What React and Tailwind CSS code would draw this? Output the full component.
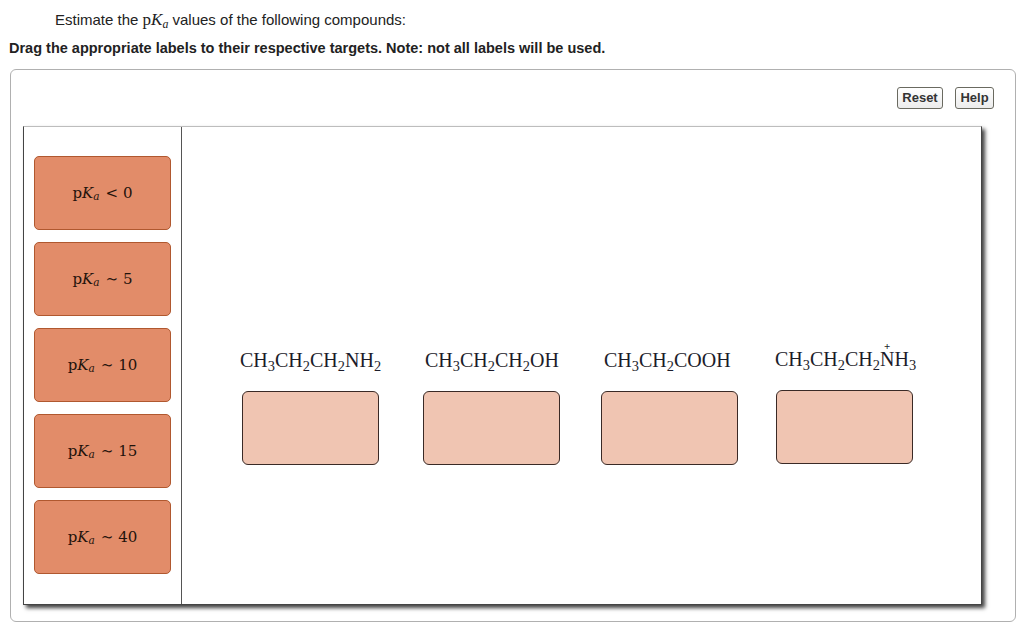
import React from 'react';

const labels = ['< 0', '∼ 5', '∼ 10', '∼ 15', '∼ 40'];

const Pka = ({ className = '' }) => (
  <span className={className}>
    p<i>K</i>
    <sub className="text-[0.7em] italic">a</sub>
  </span>
);

const Sub = ({ children }) => (
  <sub className="text-[0.72em]">{children}</sub>
);

const compounds = [
  {
    col: 'ml-0',
    txt: '-ml-[2px]',
    body: <>CH<Sub>3</Sub>CH<Sub>2</Sub>CH<Sub>2</Sub>NH<Sub>2</Sub></>,
  },
  {
    col: 'ml-[44px]',
    txt: 'ml-[2px]',
    body: <>CH<Sub>3</Sub>CH<Sub>2</Sub>CH<Sub>2</Sub>OH</>,
  },
  {
    col: 'ml-[41px]',
    txt: 'ml-[3px]',
    body: <>CH<Sub>3</Sub>CH<Sub>2</Sub>COOH</>,
  },
  {
    col: 'ml-[38px] -mt-[1px]',
    txt: '-ml-[1px]',
    body: (
      <>
        CH<Sub>3</Sub>CH<Sub>2</Sub>CH<Sub>2</Sub>
        <span className="relative">
          N
          <span className="absolute left-[4px] -top-[16px] text-[11px] font-bold">+</span>
        </span>
        H<Sub>3</Sub>
      </>
    ),
  },
];

const App = () => {
  return (
    <div className="w-[1024px] h-[630px] bg-white overflow-hidden font-['Liberation_Sans',Arial,sans-serif] text-[#222]">
      {/* prompt */}
      <div className="pl-[55px] pt-[10px] h-[38px] text-[15px] leading-[20px]">
        Estimate the <Pka className="font-['Liberation_Serif',serif] text-[17px]" /> values of the following compounds:
      </div>
      <div className="pl-[9px] h-[21px] text-[14.5px] leading-[20px] font-bold">
        Drag the appropriate labels to their respective targets. Note: not all labels will be used.
      </div>

      {/* panel */}
      <div className="mt-[10px] ml-[10px] w-[1006px] h-[553px] border border-[#b0b0b0] rounded-[6px]">
        <div className="flex justify-end gap-[12px] pt-[17px] pr-[21px] h-[56px]">
          <button className="h-[22px] w-[46px] border border-[#6a6a60] rounded-[3px] bg-gradient-to-b from-white to-[#ececec] text-[13px] font-bold text-[#333]">
            Reset
          </button>
          <button className="h-[22px] w-[39px] border border-[#6a6a60] rounded-[3px] bg-gradient-to-b from-white to-[#ececec] text-[13px] font-bold text-[#333]">
            Help
          </button>
        </div>

        {/* canvas */}
        <div className="ml-[12px] w-[959px] h-[479px] flex border border-[#444] border-t-[#bdbdbd] bg-white shadow-[3px_3px_4px_rgba(0,0,0,0.75)]">
          <div className="w-[158px] shrink-0 border-r border-[#555] pt-[29px] pl-[10px] flex flex-col gap-[12px]">
            {labels.map((l) => (
              <div
                key={l}
                className="w-[137px] h-[74px] rounded-[5px] bg-[#e28c69] border border-[#b0582f] flex items-center justify-center font-['DejaVu_Serif',serif] text-[15px] text-[#1f130c]"
              >
                <Pka />
                <span className="ml-[6px]">{l}</span>
              </div>
            ))}
          </div>

          <div className="flex-1 pl-[60px] pt-[219px]">
            <div className="flex items-start">
              {compounds.map((c, i) => (
                <div key={i} className={`w-[137px] shrink-0 flex flex-col ${c.col}`}>
                  <div className={`h-[45px] whitespace-nowrap font-['Liberation_Serif',serif] text-[20px] leading-[28px] text-[#1c1c2a] ${c.txt}`}>
                    {c.body}
                  </div>
                  <div className="w-[137px] h-[74px] rounded-[6px] bg-[#f0c5b2] border border-[#3a2a26]" />
                </div>
              ))}
            </div>
          </div>
        </div>
      </div>
    </div>
  );
};

export default App;
